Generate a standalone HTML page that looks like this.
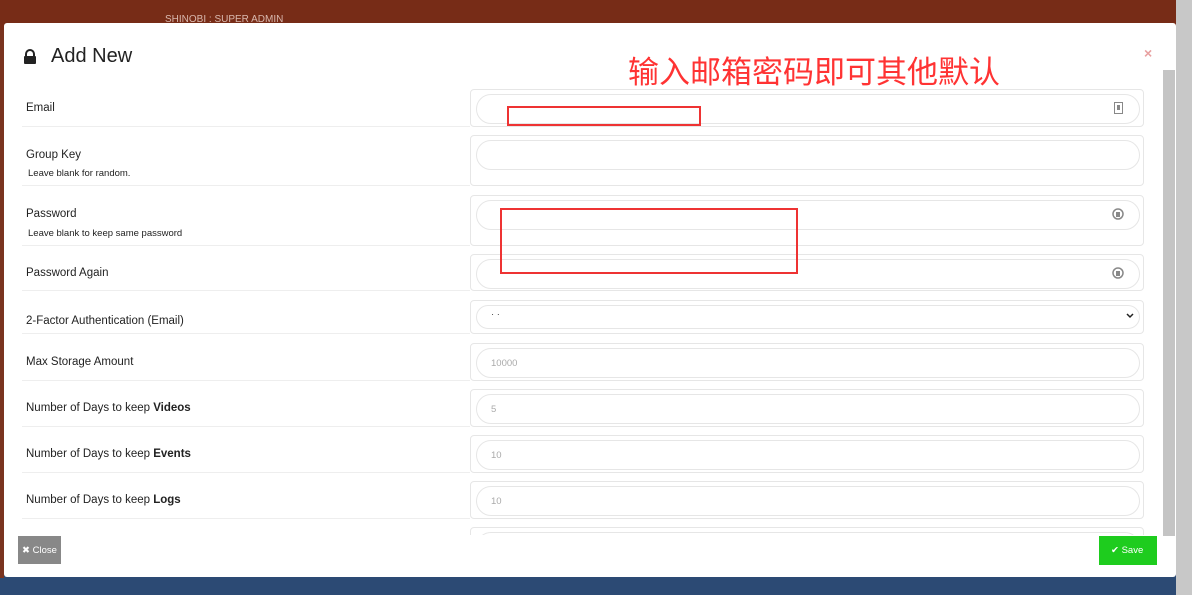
<!DOCTYPE html>
<html><head><meta charset="utf-8"><style>
*{box-sizing:border-box;margin:0;padding:0}
body{width:1192px;height:595px;overflow:hidden;position:relative;font-family:"Liberation Sans",sans-serif;background:#2c4a74}
.top{position:absolute;left:0;top:0;width:1192px;height:30px;background:#772c17}
.top span{position:absolute;left:165px;top:14px;font-size:10px;color:#d9b8ae}
.side{position:absolute;left:0;top:30px;width:4px;height:548px;background:#7a3420}
.pscroll{position:absolute;left:1176px;top:0;width:16px;height:595px;background:#c8c8c8}
.modal{position:absolute;left:4px;top:23px;width:1172px;height:554px;background:#fff;border-radius:3px}
h1{position:absolute;left:47px;top:22px;font-size:20px;font-weight:normal;color:#222}
.lock{position:absolute;left:19px;top:26px}
.x{position:absolute;left:1140px;top:22px;color:#e8a0a0;font-size:14px;font-weight:bold}
.note{position:absolute;left:624px;top:24px;font-size:31px;color:#f33;font-family:"Liberation Sans","Noto Sans CJK SC",sans-serif;white-space:nowrap}
.row{position:absolute;left:18px;width:1122px}
.lab{position:absolute;left:0;top:0;width:448px;height:100%;border-bottom:1px solid #eee;}
.lab b{font-weight:bold}
.lab .t{position:absolute;left:4px;font-size:11.5px;color:#222;margin-top:1px}
.lab .s{position:absolute;left:6px;font-size:9.5px;color:#222;margin-top:1px}
.box{position:absolute;left:448px;top:0;width:674px;height:100%;border:1px solid #e6e6e6;border-radius:4px}
.pill{position:absolute;left:5px;top:4px;width:664px;height:30px;border:1px solid #e6e6e6;border-radius:16px;font-size:9.5px;color:#aaa;padding:9px 14px}
.iscroll{position:absolute;left:1159px;top:47px;width:12px;height:466px;background:#c4c4c4}
.close{position:absolute;left:14px;top:513px;width:43px;height:28px;background:#888;color:#fff;font-size:9.5px;padding-top:9px;padding-left:4px}
.save{position:absolute;left:1095px;top:513px;width:58px;height:29px;background:#1ecc1e;color:#fff;font-size:9.5px;padding-top:9px;padding-left:12px}
.rect{position:absolute;border:2px solid #e33}
</style></head><body>
<div class="top"><span>SHINOBI : SUPER ADMIN</span></div>
<div class="side"></div>
<div class="pscroll"></div>
<div class="modal">
<svg class="lock" width="14" height="16" viewBox="0 0 14 16"><path d="M3 7V5a4 4 0 0 1 8 0v2" fill="none" stroke="#222" stroke-width="2"/><rect x="1" y="7" width="12" height="8" rx="1" fill="#222"/></svg>
<h1>Add New</h1>
<div class="x">×</div>
<div class="note">输入邮箱密码即可其他默认</div>

<div class="row" style="top:66px;height:38px"><div class="lab"><span class="t" style="top:12px">Email</span></div><div class="box"><div class="pill"></div><svg style="position:absolute;left:643px;top:12px" width="9" height="12"><rect x="0.5" y="0.5" width="8" height="11" fill="none" stroke="#888"/><rect x="3" y="3" width="3" height="5" fill="#888"/></svg></div></div>
<div class="row" style="top:112px;height:51px"><div class="lab"><span class="t" style="top:13px">Group Key</span><span class="s" style="top:32px">Leave blank for random.</span></div><div class="box"><div class="pill"></div></div></div>
<div class="row" style="top:172px;height:51px"><div class="lab"><span class="t" style="top:12px">Password</span><span class="s" style="top:32px">Leave blank to keep same password</span></div><div class="box"><div class="pill"></div><svg style="position:absolute;left:641px;top:12px" width="12" height="13"><circle cx="6" cy="6" r="5" fill="none" stroke="#888" stroke-width="1.5"/><rect x="4" y="4" width="4" height="5" fill="#888"/></svg></div></div>
<div class="row" style="top:231px;height:37px"><div class="lab"><span class="t" style="top:12px">Password Again</span></div><div class="box"><div class="pill"></div><svg style="position:absolute;left:641px;top:12px" width="12" height="13"><circle cx="6" cy="6" r="5" fill="none" stroke="#888" stroke-width="1.5"/><rect x="4" y="4" width="4" height="5" fill="#888"/></svg></div></div>
<div class="row" style="top:277px;height:34px"><div class="lab"><span class="t" style="top:14px">2-Factor Authentication (Email)</span></div><div class="box"><div class="pill" style="height:24px;padding:3px 14px;color:#444">· ·</div><svg style="position:absolute;left:655px;top:12px" width="8" height="6"><path d="M1 1l3 3 3-3" fill="none" stroke="#222" stroke-width="1.5"/></svg></div></div>
<div class="row" style="top:320px;height:38px"><div class="lab"><span class="t" style="top:12px">Max Storage Amount</span></div><div class="box"><div class="pill">10000</div></div></div>
<div class="row" style="top:366px;height:38px"><div class="lab"><span class="t" style="top:12px">Number of Days to keep <b>Videos</b></span></div><div class="box"><div class="pill">5</div></div></div>
<div class="row" style="top:412px;height:38px"><div class="lab"><span class="t" style="top:12px">Number of Days to keep <b>Events</b></span></div><div class="box"><div class="pill">10</div></div></div>
<div class="row" style="top:458px;height:38px"><div class="lab"><span class="t" style="top:12px">Number of Days to keep <b>Logs</b></span></div><div class="box"><div class="pill">10</div></div></div>
<div class="row" style="top:504px;height:8px;overflow:hidden"><div class="box" style="height:20px"><div class="pill"></div></div></div>
<div class="iscroll"></div>
<div class="close">✖ Close</div>
<div class="save">✔ Save</div>
</div>
<div class="rect" style="left:507px;top:106px;width:194px;height:20px"></div>
<div class="rect" style="left:500px;top:208px;width:298px;height:66px"></div>
</body></html>
